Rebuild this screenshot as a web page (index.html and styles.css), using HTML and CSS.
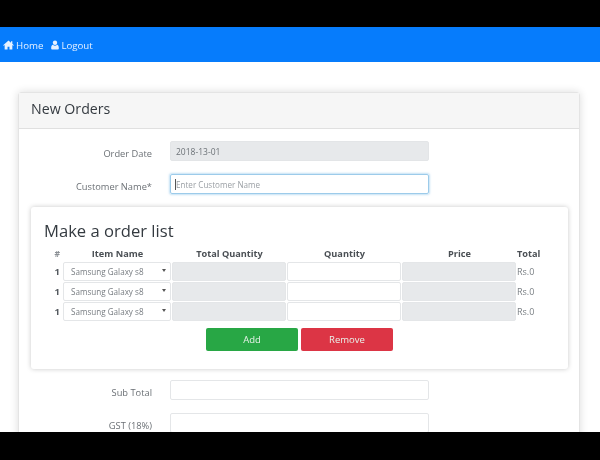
FILE: index.html
```html
<!DOCTYPE html>
<html lang="en">
<head>
<meta charset="utf-8">
<title>New Orders</title>
<link rel="stylesheet" href="styles.css">
</head>
<body>
<div class="letterbox-top"></div>
<nav class="navbar">
  <a class="nav-link" href="#"><svg class="icon" viewBox="0 0 16 14"><path d="M8 0.6 0.2 7.2l.8 1L2.4 7v6.6h4.2V9.4h2.8v4.2h4.2V7l1.4 1.2.8-1-2.2-1.9V1.4h-2v2.2z"/></svg>Home</a>
  <a class="nav-link" href="#"><svg class="icon user" viewBox="0 0 12 14"><circle cx="6" cy="3.6" r="3.3"/><path d="M3 6.8C1.2 7.2.3 8.6.3 11v1.2c0 1 .7 1.6 1.6 1.6h8.2c.9 0 1.6-.6 1.6-1.6V11c0-2.400-.9-3.800-2.700-4.200C8.200 7.700 7.200 8.100 6 8.100S3.800 7.700 3 6.800z"/></svg>Logout</a>
</nav>
<main class="page">
  <section class="card">
    <header class="card-header">New Orders</header>
    <div class="card-body">
      <div class="form-row">
        <label class="form-label">Order Date</label>
        <input class="control" type="text" value="2018-13-01" disabled>
      </div>
      <div class="form-row">
        <label class="form-label">Customer Name*</label>
        <div class="focus-control"><span class="caret"></span>Enter Customer Name</div>
      </div>
      <div class="inner-card">
        <h2 class="inner-title">Make a order list</h2>
        <table class="orders">
          <thead>
            <tr>
              <th class="col-num muted">#</th>
              <th class="col-item">Item Name</th>
              <th class="col-field">Total Quantity</th>
              <th class="col-field">Quantity</th>
              <th class="col-field">Price</th>
              <th class="col-total">Total</th>
            </tr>
          </thead>
          <tbody>
            <tr>
              <td class="num">1</td>
              <td><div class="select">Samsung Galaxy s8<span class="arrow"></span></div></td>
              <td><div class="cell cell-off"></div></td>
              <td><div class="cell"></div></td>
              <td><div class="cell cell-off"></div></td>
              <td class="total">Rs.0</td>
            </tr>
            <tr>
              <td class="num">1</td>
              <td><div class="select">Samsung Galaxy s8<span class="arrow"></span></div></td>
              <td><div class="cell cell-off"></div></td>
              <td><div class="cell"></div></td>
              <td><div class="cell cell-off"></div></td>
              <td class="total">Rs.0</td>
            </tr>
            <tr>
              <td class="num">1</td>
              <td><div class="select">Samsung Galaxy s8<span class="arrow"></span></div></td>
              <td><div class="cell cell-off"></div></td>
              <td><div class="cell"></div></td>
              <td><div class="cell cell-off"></div></td>
              <td class="total">Rs.0</td>
            </tr>
          </tbody>
        </table>
        <div class="actions">
          <button class="btn btn-add" type="button">Add</button>
          <button class="btn btn-remove" type="button">Remove</button>
        </div>
      </div>
      <div class="form-row">
        <label class="form-label">Sub Total</label>
        <div class="control plain"></div>
      </div>
      <div class="form-row">
        <label class="form-label">GST (18%)</label>
        <div class="control plain"></div>
      </div>
    </div>
  </section>
</main>
<div class="letterbox-bottom"></div>
</body>
</html>
```

FILE: styles.css
```css
* { box-sizing: border-box; }
html, body { margin: 0; height: 460px; overflow: hidden; }
body {
  display: flex;
  flex-direction: column;
  background: #fff;
  font-family: "Open Sans", "Noto Sans", sans-serif;
  color: #5f6468;
}
.letterbox-top { flex: 0 0 27px; background: #000; }
.letterbox-bottom { flex: 0 0 28px; background: #000; position: relative; }
.navbar {
  flex: 0 0 35px;
  background: #067cfc;
  display: flex;
  align-items: center;
  padding: 1px 3px 0;
  gap: 8px;
  filter: blur(.35px);
}
.nav-link {
  display: flex;
  align-items: center;
  gap: 2px;
  color: #e6f1ff;
  font-size: 9.7px;
  text-decoration: none;
}
.icon { width: 11px; height: 10px; fill: #e6f1ff; }
.icon.user { width: 8px; height: 10px; }
.page { flex: 1; overflow: hidden; padding: 30px 20px 0 18px; filter: blur(.35px); }
.card {
  border: 1px solid #e4e4e4;
  border-radius: 3px;
  box-shadow: 0 0 8px rgba(0, 0, 0, .14);
  height: 420px;
}
.card-header {
  height: 36px;
  padding: 0 0 4px 12px;
  display: flex;
  align-items: center;
  background: #f6f6f6;
  border-bottom: 1px solid #e0e0e0;
  color: #343a40;
  font-size: 14.2px;
}
.card-body { padding: 12px 12px 0; }
.form-row { display: flex; align-items: flex-start; margin-bottom: 13px; }
.form-label {
  width: 121px;
  margin-right: 18px;
  padding-top: 6px;
  text-align: right;
  font-size: 9.3px;
  line-height: 14px;
  color: #6b7075;
}
.control {
  width: 259px;
  height: 20px;
  padding: 0 5px;
  border: 1px solid #e4e6e8;
  border-radius: 2px;
  background: #fff;
  font: 8.5px "Open Sans", sans-serif;
  color: #6d7378;
}
.control:disabled { background: #e7e9eb; border-color: #e3e5e7; color: #6d7378; opacity: 1; }
.focus-control {
  width: 259px;
  height: 20px;
  padding: 0 4px;
  display: flex;
  align-items: center;
  border: 1px solid #9ccbea;
  border-radius: 2px;
  box-shadow: 0 0 2px 1px rgba(150, 200, 235, .55);
  font-size: 8.1px;
  color: #9a9fa4;
}
.caret { width: 1px; height: 11px; background: #555; }
.inner-card {
  width: 537px;
  height: 162px;
  margin: 1px 0 11px;
  padding: 12px 13px 0;
  border-radius: 3px;
  background: #fff;
  box-shadow: 0 0 5px rgba(0, 0, 0, .22);
}
.inner-title {
  margin: 0 0 4px;
  font-size: 16.6px;
  font-weight: 400;
  line-height: 23px;
  color: #343a40;
}
.orders { width: 497px; border-collapse: collapse; table-layout: fixed; }
.orders th {
  height: 16px;
  padding: 0 0 2px;
  text-align: center;
  font-size: 9.2px;
  font-weight: 700;
  color: #4a4f54;
}
.orders th.muted { color: #8a8f94; font-size: 8.5px; text-align: right; padding-right: 3px; }
.orders th.col-total { text-align: left; }
.col-num { width: 19px; }
.col-item { width: 109px; }
.col-field { width: 115px; }
.col-total { width: 24px; }
.orders td { height: 20px; padding: 0 1px 1px 0; }
.orders td.num { text-align: right; padding: 0 3px 1px 0; font-size: 9.5px; font-weight: 700; color: #54595e; }
.orders td.total { padding: 0 0 1px; font-size: 9px; color: #7b8085; overflow: visible; white-space: nowrap; }
.select {
  position: relative;
  height: 19px;
  padding-left: 7px;
  display: flex;
  align-items: center;
  border: 1px solid #e4e6e8;
  border-radius: 2px;
  font-size: 8.1px;
  color: #777c81;
}
.arrow {
  position: absolute;
  right: 4px;
  top: 6px;
  border: 2.5px solid transparent;
  border-top: 3.5px solid #555;
  border-bottom: 0;
}
.cell { height: 19px; border: 1px solid #e4e6e8; border-radius: 2px; background: #fff; }
.cell-off { background: #e7e9eb; }
.actions { display: flex; justify-content: flex-start; gap: 3px; margin: 6px 0 0 162px; }
.btn {
  width: 92px;
  height: 23px;
  border: 0;
  border-radius: 2px;
  color: #e8f2ea;
  font: 9.5px "Open Sans", sans-serif;
}
.btn-add { background: #28a745; }
.btn-remove { background: #dc3545; }
.plain { display: block; }
```
